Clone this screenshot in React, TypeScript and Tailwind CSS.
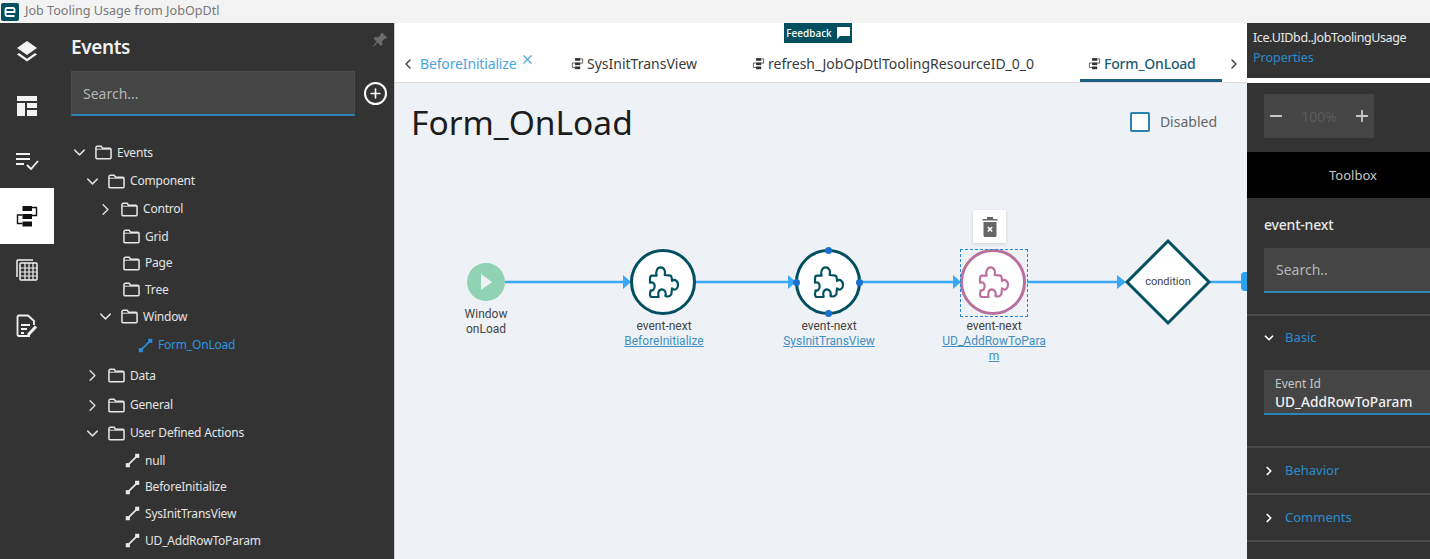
import { ChevronDown, ChevronLeft, ChevronRight, Minus, Plus, X } from 'lucide-react'

function Folder() {
  return (
    <svg width="17" height="15" viewBox="0 0 18 15" fill="none" stroke="#e8e8e8" strokeWidth="1.6" className="shrink-0">
      <path d="M1 13V2.500C1 1.600 1.600 1 2.500 1H6.500L8 3H15.500C16.400 3 17 3.600 17 4.500V13C17 13.600 16.600 14 16 14H2C1.400 14 1 13.600 1 13Z" />
      <path d="M1 4H17" strokeWidth="1" />
    </svg>
  )
}

function Connector({ color = '#e8e8e8' }: { color?: string }) {
  return (
    <svg width="15" height="15" viewBox="0 0 16 16" fill="none" className="shrink-0">
      <path d="M3 13L13 3" stroke={color} strokeWidth="1.800" />
      <rect x="0.800" y="10.800" width="4.400" height="4.400" fill={color} />
      <rect x="10.800" y="0.800" width="4.400" height="4.400" fill={color} />
    </svg>
  )
}

function FlowIcon({ size = 24, color = '#111' }: { size?: number; color?: string }) {
  return (
    <svg width={size} height={size} viewBox="0 0 24 24" fill="none" className="shrink-0">
      <rect x="7.500" y="2" width="9.500" height="5" fill={color} />
      <rect x="7.500" y="10" width="9.500" height="5" fill={color} />
      <rect x="7.500" y="17.500" width="9.500" height="5" fill={color} />
      <path d="M17 3.500H21.500V11.500H17M7.500 11H2.500V19.500H7.500" stroke={color} strokeWidth="1.400" />
    </svg>
  )
}

type Row = { label: string; h: number; indent: number; chevron?: 'open' | 'closed'; kind?: 'link' | 'active' }

const rows: Row[] = [
  { label: 'Events', h: 29, indent: 70, chevron: 'open' },
  { label: 'Component', h: 28, indent: 83, chevron: 'open' },
  { label: 'Control', h: 28, indent: 96, chevron: 'closed' },
  { label: 'Grid', h: 27, indent: 123 },
  { label: 'Page', h: 26, indent: 123 },
  { label: 'Tree', h: 27, indent: 123 },
  { label: 'Window', h: 27, indent: 96, chevron: 'open' },
  { label: 'Form_OnLoad', h: 30, indent: 138, kind: 'active' },
  { label: 'Data', h: 31, indent: 83, chevron: 'closed' },
  { label: 'General', h: 28, indent: 83, chevron: 'closed' },
  { label: 'User Defined Actions', h: 28, indent: 83, chevron: 'open' },
  { label: 'null', h: 27, indent: 125, kind: 'link' },
  { label: 'BeforeInitialize', h: 26, indent: 125, kind: 'link' },
  { label: 'SysInitTransView', h: 27, indent: 125, kind: 'link' },
  { label: 'UD_AddRowToParam', h: 27, indent: 125, kind: 'link' },
]

function TreeRow({ row }: { row: Row }) {
  const isLink = row.kind === 'link' || row.kind === 'active'
  return (
    <div className="flex items-center" style={{ height: row.h, paddingLeft: row.indent - 54 }}>
      {row.chevron === 'open' && <ChevronDown className="mr-[6px] h-[19px] w-[19px] text-[#e0e0e0]" strokeWidth={1.8} />}
      {row.chevron === 'closed' && <ChevronRight className="mr-[6px] h-[19px] w-[19px] text-[#e0e0e0]" strokeWidth={1.8} />}
      {isLink ? <Connector color={row.kind === 'active' ? '#2a8fd6' : '#e8e8e8'} /> : <Folder />}
      <span className={`ml-[5px] text-[12px] tracking-[-0.2px] ${row.kind === 'active' ? 'text-[#2a96e0]' : 'text-[#e4e4e4]'}`}>{row.label}</span>
    </div>
  )
}

function Rail() {
  return (
    <div className="flex w-[54px] shrink-0 flex-col items-center">
      <div className="flex h-[55px] w-full items-center justify-center">
        <svg width="22" height="22" viewBox="0 0 22 22" fill="#f2f2f2">
          <path d="M11 1L21 8L11 15L1 8Z" />
          <path d="M3 13L1 14.500L11 21.500L21 14.500L19 13L11 18.700Z" />
        </svg>
      </div>
      <div className="flex h-[55px] w-full items-center justify-center">
        <svg width="22" height="20" viewBox="0 0 22 20" fill="#f2f2f2">
          <rect x="1" y="0" width="20" height="5" />
          <rect x="1" y="7" width="8" height="13" />
          <rect x="11" y="7" width="10" height="5" />
          <rect x="11" y="14" width="10" height="6" />
        </svg>
      </div>
      <div className="flex h-[55px] w-full items-center justify-center">
        <svg width="24" height="18" viewBox="0 0 24 18" fill="none" stroke="#f2f2f2" strokeWidth="1.800">
          <path d="M1 2H15M1 7H15M1 12H9" />
          <path d="M12 13L16 17L23 9" />
        </svg>
      </div>
      <div className="flex h-[56px] w-full items-center justify-center bg-white">
        <FlowIcon />
      </div>
      <div className="flex h-[52px] w-full items-center justify-center">
        <svg width="22" height="22" viewBox="0 0 22 22" fill="none" stroke="#f2f2f2" strokeWidth="1.500">
          <path d="M1 18V2C1 1.400 1.400 1 2 1H17" />
          <rect x="4" y="4" width="17" height="17" rx="1" />
          <path d="M4 9H21M4 13H21M4 17H21M9 4V21M13 4V21M17 4V21" strokeWidth="1.200" />
        </svg>
      </div>
      <div className="flex h-[60px] w-full items-center justify-center">
        <svg width="22" height="24" viewBox="0 0 22 24" fill="none" stroke="#f2f2f2" strokeWidth="1.800">
          <path d="M14 22H3C2 22 1.500 21.400 1.500 20.500V3C1.500 2 2 1.500 3 1.500H12L18 7V11" />
          <path d="M5 11H14M5 15H11M5 19H8" />
          <path d="M12 21L20 12.500" strokeWidth="3" />
        </svg>
      </div>
    </div>
  )
}

function EventsPanel() {
  return (
    <aside className="flex w-[395px] shrink-0 border-r border-[#cfcfcf] bg-[#333333]">
      <Rail />
      <div className="relative min-w-0 flex-1 pl-[17px] pr-[6px]">
        <svg width="16" height="16" viewBox="0 0 16 16" fill="#6b6b6b" className="absolute right-[6px] top-[9px]">
          <path d="M10 0.500L15.500 6L14 7L13 6.500L10 9.500L10.500 12.500L9 14L5.500 10.500L1.500 15L1 14.500L4.500 9.500L1.500 6.500L3 5L6 5.500L9 2.500L8.500 2Z" />
        </svg>
        <h1 className="pt-[10px] text-[19px] font-semibold leading-[28px] tracking-[-0.4px] text-[#f0f0f0]">Events</h1>
        <div className="mt-[10px] flex items-center gap-[9px]">
          <div className="flex h-[45px] w-[284px] items-center border border-b-2 border-[#4c4c4c] border-b-[#2a86b8] bg-[#454545] px-[11px] text-[14px] text-[#b5b5b5]">
            Search...
          </div>
          <div className="flex h-[23px] w-[23px] items-center justify-center rounded-full border-2 border-white">
            <Plus className="h-[15px] w-[15px] text-white" strokeWidth={2.6} />
          </div>
        </div>
        <div className="-ml-[17px] pt-[22px]">
          {rows.map((row) => (
            <TreeRow key={row.label} row={row} />
          ))}
        </div>
      </div>
    </aside>
  )
}

function TabLabel({ label, active }: { label: string; active?: boolean }) {
  return (
    <span className={`flex items-center gap-[3px] text-[14px] ${active ? 'font-medium tracking-[-0.2px] text-[#1d5a78]' : 'text-[#3a3a3a]'}`}>
      <FlowIcon size={13} color="#333" />
      {label}
    </span>
  )
}

function Tabs() {
  return (
    <div className="relative flex h-[60px] shrink-0 items-end border-b border-[#dcdcdc] bg-white">
      <div className="absolute left-[389px] top-0 flex h-[20px] w-[68px] items-center justify-center gap-[5px] bg-[#02505f] text-[10px] font-medium text-white">
        Feedback
        <svg width="13" height="12" viewBox="0 0 13 12" fill="#fff">
          <path d="M1 0H12C12.600 0 13 0.400 13 1V8C13 8.600 12.600 9 12 9H3L0 12V1C0 0.400 0.400 0 1 0Z" />
        </svg>
      </div>
      <div className="flex h-[38px] w-full items-center">
        <ChevronLeft className="ml-[5px] mt-[2px] h-[16px] w-[16px] text-[#444]" strokeWidth={2.2} />
        <span className="ml-[4px] flex w-[151px] items-start text-[14px] tracking-[-0.15px] text-[#4aa5e0]">
          BeforeInitialize
          <X className="ml-[3px] -mt-[1px] h-[15px] w-[15px]" strokeWidth={1.8} />
        </span>
        <TabLabel label="SysInitTransView" />
        <span className="w-[55px]" />
        <TabLabel label="refresh_JobOpDtlToolingResourceID_0_0" />
        <div className="ml-[46px] flex h-[38px] w-[142px] items-center border-b-[3px] border-[#1b5f84] pl-[8px] pt-[3px]">
          <TabLabel label="Form_OnLoad" active />
        </div>
        <ChevronRight className="ml-[4px] mt-[2px] h-[16px] w-[16px] text-[#444]" strokeWidth={2.2} />
      </div>
    </div>
  )
}

function PuzzleNode({ x, color, handles }: { x: number; color: string; handles?: boolean }) {
  return (
    <div
      className="absolute top-[166px] flex h-[66px] w-[66px] items-center justify-center rounded-full border-[3px] bg-white"
      style={{ left: x - 33, borderColor: color }}
    >
      <svg width="46" height="46" viewBox="0 0 138 138" fill="none" stroke={color} strokeWidth="6.500" strokeLinejoin="round">
        <path d="M36 50L50 50C46 37 52 25 62 25C72 25 78 37 74 48L92 50C95 52 96 58 96 66C104 58 114 66 114 78C114 90 104 96 96 88L94 106C90 113 84 114 76 111C80 101 74 91 66 91C56 91 52 104 56 114L36 114C32 114 30 110 30 104L32 94C40 97 44 88 44 81C44 73 38 68 30 71L30 60C30 54 32 50 36 50Z" />
      </svg>
      {handles && (
        <>
          <span className="absolute -top-[5px] left-[27px] h-[7px] w-[7px] rounded-full bg-[#1a6fd0]" />
          <span className="absolute -bottom-[5px] left-[27px] h-[7px] w-[7px] rounded-full bg-[#1a6fd0]" />
          <span className="absolute -left-[5px] top-[27px] h-[7px] w-[7px] rounded-full bg-[#1a6fd0]" />
          <span className="absolute -right-[5px] top-[27px] h-[7px] w-[7px] rounded-full bg-[#1a6fd0]" />
        </>
      )}
    </div>
  )
}

function NodeLabel({ x, link, w = 110 }: { x: number; link: string; w?: number }) {
  return (
    <div
      className="absolute top-[236px] break-all text-center font-['Roboto',sans-serif] text-[12px] leading-[15px] text-[#444]"
      style={{ left: x - w / 2, width: w }}
    >
      <div>event-next</div>
      <div className="text-[#3f8fc0] underline">{link}</div>
    </div>
  )
}

function Canvas() {
  return (
    <div className="relative min-h-0 flex-1 overflow-hidden bg-[#eef2f6]">
      <h2 className="pl-[16px] pt-[15px] text-[33.5px] font-normal leading-[48px] text-[#1c1c1c]">Form_OnLoad</h2>
      <div className="absolute right-[30px] top-[28px] flex items-center gap-[10px] text-[14px] text-[#666]">
        <span className="h-[20px] w-[20px] rounded-[2px] border-2 border-[#2a7fae] bg-white" />
        Disabled
      </div>

      <svg width="852" height="300" className="absolute left-0 top-0">
        <g stroke="#39a9f7" strokeWidth="2.500" fill="none">
          <path d="M110 199H230M300 199H395M465 199H560M632 199H725M815 199H846" />
        </g>
        <g fill="#39a9f7">
          <path d="M228 192L236 199L228 206Z" />
          <path d="M393 192L401 199L393 206Z" />
          <path d="M558 192L566 199L558 206Z" />
          <path d="M722 192L731 199L722 206Z" />
        </g>
        <path d="M773 158L814 199L773 240L732 199Z" fill="#fff" stroke="#02505f" strokeWidth="3" />
      </svg>

      <div className="absolute left-[72px] top-[180px] flex h-[38px] w-[38px] items-center justify-center rounded-full bg-[#8fd3b4]">
        <svg width="12" height="16" viewBox="0 0 12 16" fill="#eef2f6"><path d="M1 0L12 8L1 16Z" /></svg>
      </div>
      <div className="absolute left-[61px] top-[224px] w-[60px] text-center font-['Roboto',sans-serif] text-[12px] leading-[15px] text-[#444]">
        Window onLoad
      </div>

      <PuzzleNode x={268} color="#02505f" />
      <NodeLabel x={269} link="BeforeInitialize" />
      <PuzzleNode x={433} color="#02505f" handles />
      <NodeLabel x={434} link="SysInitTransView" />
      <PuzzleNode x={598} color="#b9709f" />
      <NodeLabel x={599} link="UD_AddRowToParam" w={106} />

      <div className="absolute left-[565px] top-[166px] h-[68px] w-[68px] border border-dashed border-[#2a86d8]" />
      <div className="absolute left-[578px] top-[127px] flex h-[33px] w-[33px] items-center justify-center bg-white shadow-[0_1px_3px_rgba(0,0,0,0.15)]">
        <svg width="16" height="20" viewBox="0 0 16 20" fill="#666">
          <rect x="0.500" y="2" width="15" height="1.500" />
          <rect x="5" y="0" width="6" height="2" />
          <path d="M1.500 5H14.500V18.500C14.500 19.300 14 20 13 20H3C2 20 1.500 19.300 1.500 18.500Z" />
          <path d="M5.800 10L10.200 14.500M10.200 10L5.800 14.500" stroke="#fff" strokeWidth="1.600" />
        </svg>
      </div>

      <div className="absolute left-[743px] top-[191px] w-[60px] text-center font-['Roboto',sans-serif] text-[11px] leading-[16px] text-[#444]">
        condition
      </div>
      <div className="absolute left-[846px] top-[189px] h-[19px] w-[8px] rounded-l-[4px] bg-[#2aa3f0]" />
    </div>
  )
}

function Section({ label }: { label: string }) {
  return (
    <div className="flex h-[47px] shrink-0 items-center gap-[9px] border-b-2 border-[#4a4a4a] pl-[15px] text-[13px] text-[#2a8ccc]">
      <ChevronRight className="h-[14px] w-[14px] text-white" strokeWidth={3} />
      {label}
    </div>
  )
}

function PropertiesPanel() {
  return (
    <aside className="flex w-[183px] shrink-0 flex-col overflow-hidden bg-[#333333]">
      <div className="h-[55px] shrink-0 bg-[#333333] pl-[6px] pt-[5px] text-[12.5px] leading-[20px]">
        <div className="tracking-[-0.4px] text-[#eaeaea]">Ice.UIDbd..JobToolingUsage</div>
        <div className="text-[#2a8ccc]">Properties</div>
      </div>
      <div className="h-[5px] shrink-0 bg-white" />
      <div className="shrink-0 pb-[14px] pl-[17px] pt-[11px]">
        <div className="flex h-[44px] w-[110px] items-center justify-between bg-[#454545] px-[3px] text-[14px] text-[#5c5c5c]">
          <Minus className="h-[18px] w-[18px] text-[#c8c8c8]" strokeWidth={2.4} />
          100%
          <Plus className="h-[18px] w-[18px] text-[#c8c8c8]" strokeWidth={2.4} />
        </div>
      </div>
      <div className="flex h-[46px] shrink-0 items-center bg-black pl-[82px] pt-[2px] text-[13px] text-[#c8c8c8]">Toolbox</div>
      <div className="shrink-0 pl-[17px] pt-[17px] text-[14px] font-medium leading-[20px] tracking-[-0.2px] text-[#e8e8e8]">event-next</div>
      <div className="ml-[17px] mt-[13px] flex h-[45px] w-[200px] shrink-0 items-center border-b-2 border-[#2a86b8] bg-[#454545] pl-[12px] text-[14px] text-[#b5b5b5]">
        Search..
      </div>
      <div className="mt-[21px] h-[2px] shrink-0 bg-[#4a4a4a]" />
      <div className="flex h-[43px] shrink-0 items-center gap-[9px] pl-[15px] text-[13px] text-[#2a8ccc]">
        <ChevronDown className="h-[14px] w-[14px] text-white" strokeWidth={3} />
        Basic
      </div>
      <div className="ml-[17px] mt-[11px] h-[45px] w-[200px] shrink-0 border-b-2 border-[#2a86b8] bg-[#454545] pl-[11px] pt-[5px]">
        <div className="text-[12px] leading-[17px] text-[#c8c8c8]">Event Id</div>
        <div className="text-[13.7px] font-medium leading-[19px] text-[#f0f0f0]">UD_AddRowToParam</div>
      </div>
      <div className="mt-[31px] h-[2px] shrink-0 bg-[#4a4a4a]" />
      <Section label="Behavior" />
      <Section label="Comments" />
    </aside>
  )
}

export default function App() {
  return (
    <div className="flex h-[559px] w-[1430px] flex-col overflow-hidden bg-white font-['Noto_Sans',sans-serif]">
      <div className="flex h-[23px] shrink-0 items-center gap-[6px] bg-[#f3f3f3] pl-[1px] text-[12.6px] text-[#777]">
        <svg width="18" height="18" viewBox="0 0 18 18">
          <rect width="18" height="18" rx="2" fill="#02505f" />
          <path d="M4.500 9H13.500V6.500C13.500 5.500 13 5 12 5H6C5 5 4.500 5.500 4.500 6.500V11.500C4.500 12.500 5 13 6 13H13.500" fill="none" stroke="#fff" strokeWidth="1.800" />
        </svg>
        Job Tooling Usage from JobOpDtl
      </div>
      <div className="flex min-h-0 flex-1">
        <EventsPanel />
        <div className="flex w-[852px] shrink-0 flex-col">
          <Tabs />
          <Canvas />
        </div>
        <PropertiesPanel />
      </div>
    </div>
  )
}
